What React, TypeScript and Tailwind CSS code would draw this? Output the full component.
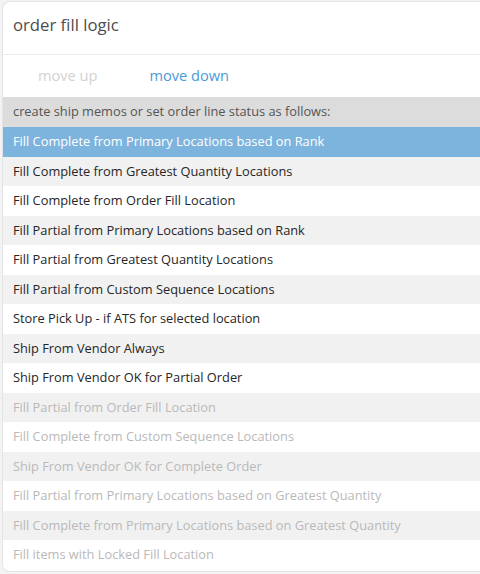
import React from "react";

type Rule = { label: string; active: boolean };

const rules: Rule[] = [
  { label: "Fill Complete from Primary Locations based on Rank", active: true },
  { label: "Fill Complete from Greatest Quantity Locations", active: true },
  { label: "Fill Complete from Order Fill Location", active: true },
  { label: "Fill Partial from Primary Locations based on Rank", active: true },
  { label: "Fill Partial from Greatest Quantity Locations", active: true },
  { label: "Fill Partial from Custom Sequence Locations", active: true },
  { label: "Store Pick Up - if ATS for selected location", active: true },
  { label: "Ship From Vendor Always", active: true },
  { label: "Ship From Vendor OK for Partial Order", active: true },
  { label: "Fill Partial from Order Fill Location", active: false },
  { label: "Fill Complete from Custom Sequence Locations", active: false },
  { label: "Ship From Vendor OK for Complete Order", active: false },
  { label: "Fill Partial from Primary Locations based on Greatest Quantity", active: false },
  { label: "Fill Complete from Primary Locations based on Greatest Quantity", active: false },
  { label: "Fill items with Locked Fill Location", active: false },
];

const RuleRow: React.FC<{ rule: Rule; index: number; selected: boolean }> = ({
  rule,
  index,
  selected,
}) => {
  const bg = selected ? "bg-[#7db4de]" : index % 2 === 1 ? "bg-[#f1f1f1]" : "bg-white";
  const color = selected
    ? "text-white"
    : rule.active
    ? "text-[#262626]"
    : "text-[#b9b9b9]";
  return (
    <div className={`h-[29.5px] flex items-center pl-[10px] text-[12.8px] ${bg} ${color}`}>
      {rule.label}
    </div>
  );
};

export default function App() {
  const selected = 0;
  return (
    <div
      className="w-[480px] h-[574px] bg-[#f3f3f3] pl-[2px] pt-[1px] overflow-hidden"
      style={{ fontFamily: '"Open Sans", "Noto Sans", sans-serif' }}
    >
      <div className="bg-white rounded-l-lg border border-r-0 border-[#e4e4e4] h-[571px] overflow-hidden">
        <div className="h-[52px] pt-[11px] pl-[10px] text-[16.7px] leading-[24px] text-[#4d4d4d]">
          order fill logic
        </div>
        <div className="h-px bg-[#ececec]" />
        <div className="h-[42px] flex items-center text-[14.6px]">
          <button className="ml-[35px] text-[#d2d2d2]">move up</button>
          <button className="ml-[52px] text-[#4a9ad6]">move down</button>
        </div>
        <div className="h-[30px] flex items-center pl-[10px] text-[12.8px] text-[#555555] bg-[#dcdcdc]">
          create ship memos or set order line status as follows:
        </div>
        <div>
          {rules.map((rule, i) => (
            <RuleRow key={rule.label} rule={rule} index={i} selected={i === selected} />
          ))}
        </div>
      </div>
    </div>
  );
}
